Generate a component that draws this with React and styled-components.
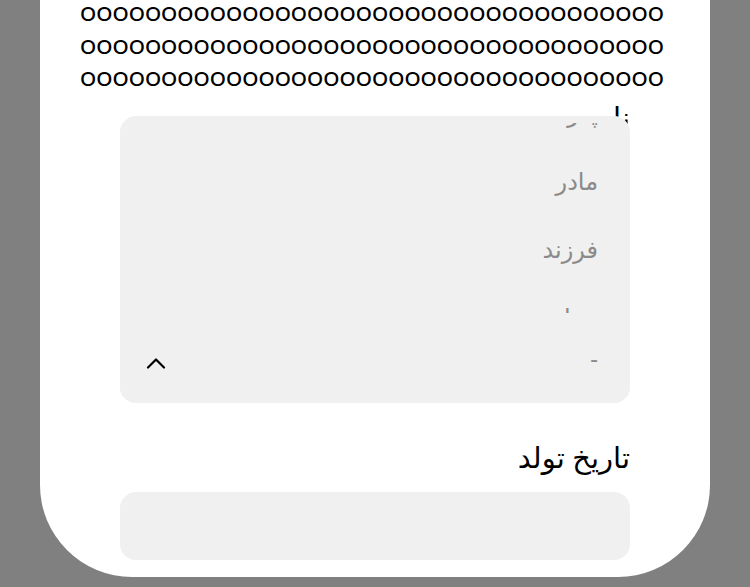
import React from 'react';
import styled, { createGlobalStyle } from 'styled-components';

const GlobalStyle = createGlobalStyle`
  html, body {
    margin: 0;
    padding: 0;
    background: #808080;
    overflow: hidden;
  }
  body {
    font-family: "Noto Sans", "DejaVu Sans", sans-serif;
  }
`;

const Page = styled.div`
  height: 587px;
  padding: 0 40px;
  box-sizing: border-box;
`;

const Card = styled.div`
  background: #ffffff;
  border-radius: 0 0 92px 92px;
  padding: 0 40px 17px;
  direction: rtl;
`;

const LongText = styled.div`
  direction: ltr;
  text-align: left;
  margin-top: -3px;
  font-size: 20.7px;
  font-weight: 500;
  line-height: 32.5px;
  color: #000;
  word-break: break-all;
`;

const Form = styled.div`
  padding: 0 40px;
  display: flex;
  flex-direction: column;
`;

const Label = styled.div`
  font-size: 29px;
  line-height: 40px;
  color: #000;
  text-align: right;
  margin-top: ${p => p.$top || 0}px;
  margin-bottom: ${p => p.$bottom || 0}px;
`;

const SelectBox = styled.div`
  position: relative;
  z-index: 1;
  background: #f0f0f0;
  border-radius: 16px;
  height: 287px;
  display: flex;
  flex-direction: column;
  overflow: hidden;
`;

const OptionsViewport = styled.div`
  flex: 1;
  margin-top: 7px;
  overflow: hidden;
`;

const OptionsList = styled.ul`
  list-style: none;
  margin: -44px 0 0;
  padding: 0 32px;
`;

const Option = styled.li`
  height: 68px;
  line-height: 68px;
  font-size: 24px;
  color: #8a8a8a;
  text-align: right;
`;

const Trigger = styled.div`
  height: 90px;
  flex-shrink: 0;
  background: #f0f0f0;
  display: flex;
  align-items: center;
  justify-content: space-between;
  padding: 0 32px 4px 26px;
  box-sizing: border-box;
`;

const Value = styled.span`
  font-size: 24px;
  color: #8a8a8a;
  margin-top: 4px;
`;

const Chevron = styled.svg`
  width: 20px;
  height: 12px;
  margin-top: 14px;
`;

const Input = styled.div`
  margin-top: 15px;
  height: 68px;
  background: #f0f0f0;
  border-radius: 16px;
`;

const options = ['پدر', 'مادر', 'فرزند', 'خواهر'];

export default function App() {
  return (
    <>
      <GlobalStyle />
      <Page>
        <Card>
          <LongText>{'O'.repeat(108)}</LongText>
          <Form>
            <Label $top={2} $bottom={-21}>نام</Label>
            <SelectBox>
              <OptionsViewport>
                <OptionsList>
                  {options.map(o => (
                    <Option key={o}>{o}</Option>
                  ))}
                </OptionsList>
              </OptionsViewport>
              <Trigger>
                <Value>-</Value>
                <Chevron viewBox="0 0 20 12" fill="none" stroke="#000" strokeWidth="2.2" strokeLinecap="round" strokeLinejoin="round">
                  <path d="M2 10.5L10 2.5l8 8" />
                </Chevron>
              </Trigger>
            </SelectBox>
            <Label $top={34}>تاریخ تولد</Label>
            <Input />
          </Form>
        </Card>
      </Page>
    </>
  );
}
